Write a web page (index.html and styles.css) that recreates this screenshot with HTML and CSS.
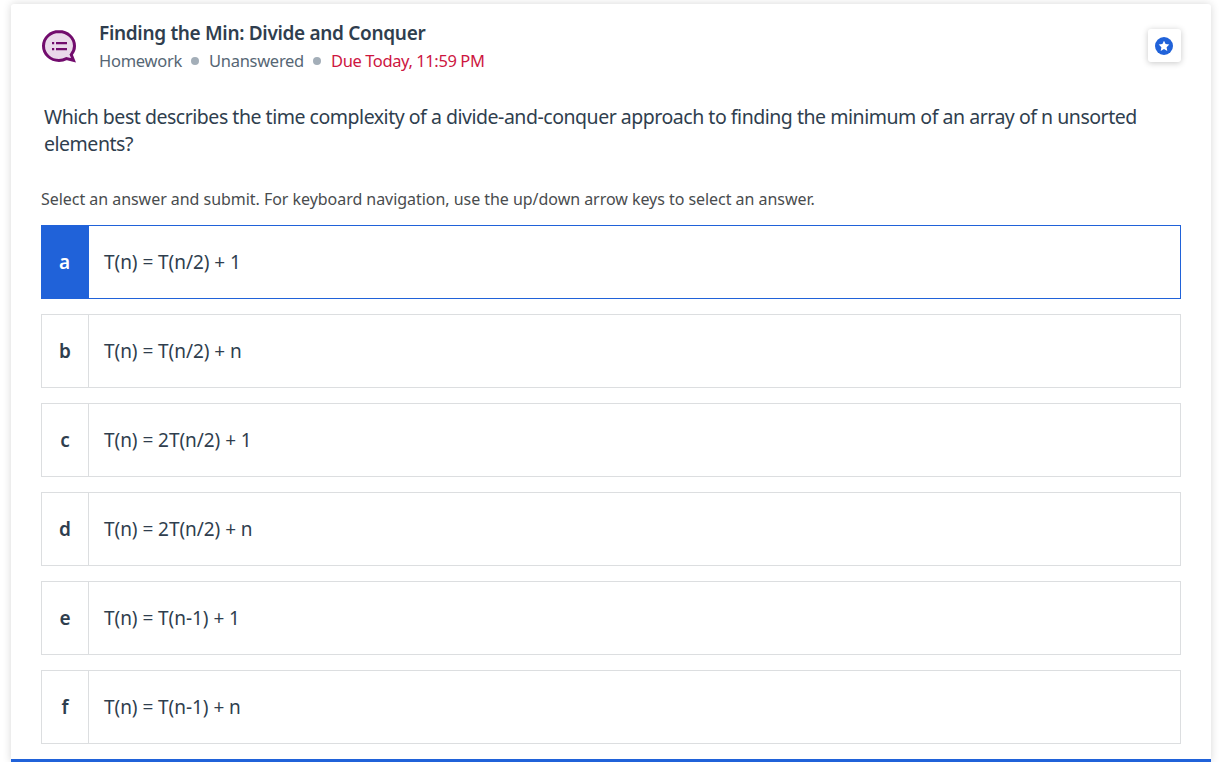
FILE: index.html
```html
<!DOCTYPE html>
<html lang="en">
<head>
<meta charset="utf-8">
<title>Finding the Min: Divide and Conquer</title>
<link rel="stylesheet" href="styles.css">
</head>
<body>
<main class="card">
  <header class="head">
    <svg class="type-icon" width="36" height="36" viewBox="0 0 36 36" aria-hidden="true">
      <path class="bubble" d="M18 3.5C9.400 3.500 2.500 10 2.500 18S9.400 32.500 18 32.500c2.800 0 5.200-.7 7.400-1.900l7.100 1.700-2.300-5.700c2.100-2.500 3.300-5.400 3.300-8.600C33.500 10 26.600 3.500 18 3.500Z"/>
      <path class="marks" d="M11 14h2.200v2.200H11zM11 20h2.200v2.200H11zM15 14h11v2.200H15zM15 20h11v2.200H15z"/>
    </svg>
    <div class="head-text">
      <h1 class="title">Finding the Min: Divide and Conquer</h1>
      <div class="meta">
        <span>Homework</span><i class="dot"></i><span>Unanswered</span><i class="dot"></i><span class="due">Due Today, 11:59 PM</span>
      </div>
    </div>
    <button class="star-btn" aria-label="Bookmark">
      <svg width="18" height="18" viewBox="0 0 18 18" aria-hidden="true">
        <circle class="star-disc" cx="9" cy="9" r="9"/>
        <path class="star" d="M9 3.700l1.600 3.400 3.700.5-2.700 2.600.7 3.700L9 12.100l-3.300 1.800.7-3.700-2.700-2.600 3.700-.5Z"/>
      </svg>
    </button>
  </header>
  <p class="question">Which best describes the time complexity of a divide-and-conquer approach to finding the minimum of an array of n unsorted elements?</p>
  <p class="hint">Select an answer and submit. For keyboard navigation, use the up/down arrow keys to select an answer.</p>
  <ul class="options">
    <li class="option selected"><span class="key">a</span><span class="answer">T(n) = T(n/2) + 1</span></li>
    <li class="option"><span class="key">b</span><span class="answer">T(n) = T(n/2) + n</span></li>
    <li class="option"><span class="key">c</span><span class="answer">T(n) = 2T(n/2) + 1</span></li>
    <li class="option"><span class="key">d</span><span class="answer">T(n) = 2T(n/2) + n</span></li>
    <li class="option"><span class="key">e</span><span class="answer">T(n) = T(n-1) + 1</span></li>
    <li class="option"><span class="key">f</span><span class="answer">T(n) = T(n-1) + n</span></li>
  </ul>
</main>
</body>
</html>
```
FILE: styles.css
```css
* { box-sizing: border-box; }
html, body { margin: 0; height: 100%; overflow: hidden; }
body {
  background: #fff;
  padding: 4px 10px 0 11px;
  font-family: "Noto Sans", "Liberation Sans", sans-serif;
  color: #2f3e4e;
}
.card {
  height: 758px;
  background: #fff;
  border-bottom: 3px solid #2062d9;
  border-radius: 3px 3px 0 0;
  box-shadow: 0 0 8px rgba(0, 0, 0, .16);
  padding: 18px 30px 0;
  overflow: hidden;
}
.head { display: flex; align-items: flex-start; }
.type-icon { flex: none; margin: 6px 0 0 0; }
.bubble { fill: #ead9ea; stroke: #720c6d; stroke-width: 3; }
.marks { fill: #720c6d; }
.head-text { flex: 1; margin-left: 22px; }
.title { margin: -1px 0 0; font-size: 19px; line-height: 24px; font-weight: 600; letter-spacing: -.32px; }
.meta { display: flex; align-items: center; margin-top: 4px; font-size: 16.5px; line-height: 24px; letter-spacing: -.28px; color: #566674; }
.dot { width: 8px; height: 8px; margin: 0 10px 0 9px; border-radius: 50%; background: #a3aeb8; }
.due { color: #cd163f; letter-spacing: -.4px; }
.star-btn {
  width: 33px; height: 33px; margin: 7px 0 0; padding: 1px 1px 0 0;
  display: flex; align-items: center; justify-content: center;
  background: #fff; border: 0; border-radius: 3px;
  box-shadow: 0 1px 6px rgba(0, 0, 0, .22);
}
.star-disc { fill: #2062d9; }
.star { fill: #fff; }
.question { margin: 30px 30px 0 3px; font-size: 19.5px; line-height: 27px; letter-spacing: -.475px; }
.hint { margin: 30px 0 0; font-size: 16px; line-height: 24px; letter-spacing: -.04px; color: #494c4e; }
.options { list-style: none; margin: 14px 0 0; padding: 0; display: flex; flex-direction: column; gap: 15px; }
.option { display: flex; height: 74px; border: 1px solid #dcdee0; font-size: 19px; letter-spacing: -.05px; }
.key {
  flex: none; width: 47px; display: flex; align-items: center; justify-content: center;
  border-right: 1px solid #dcdee0; font-weight: 600;
}
.answer { display: flex; align-items: center; padding-left: 15px; }
.selected { border-color: #2062d9; }
.selected .key { background: #2062d9; border-right-color: #2062d9; color: #fff; margin: -1px 0 -1px -1px; width: 48px; }
```
